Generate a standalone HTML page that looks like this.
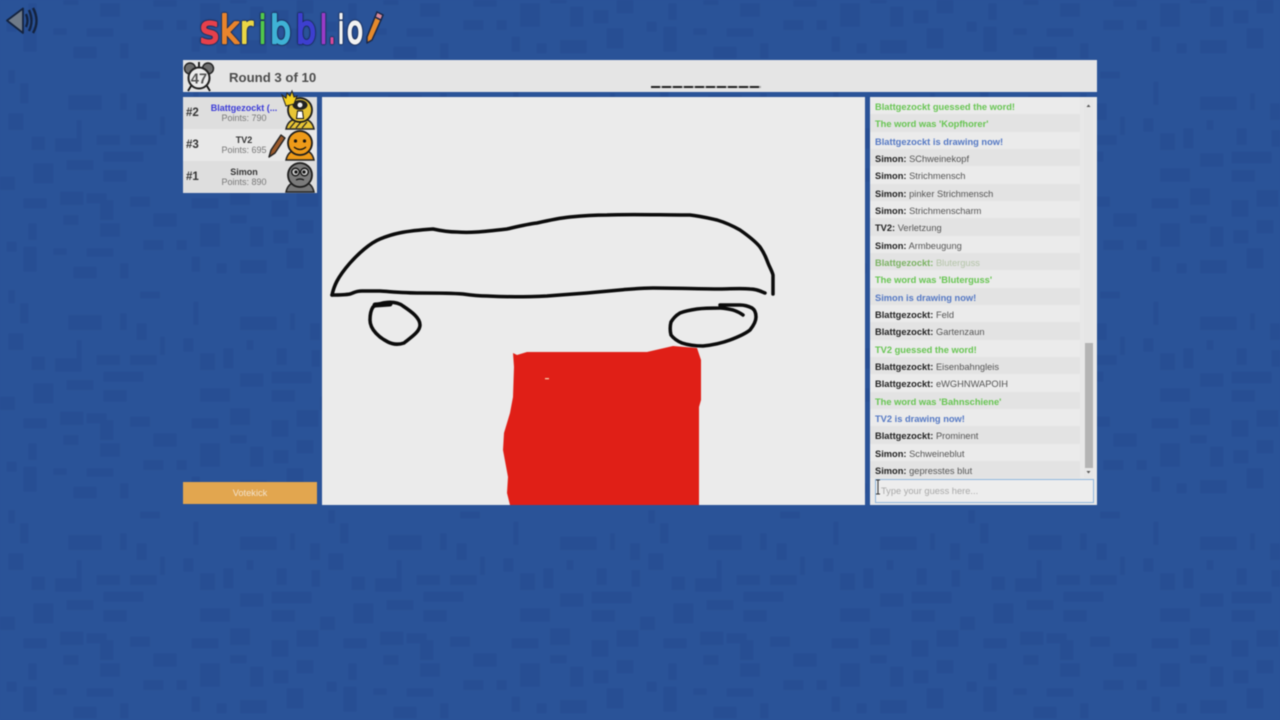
<!DOCTYPE html>
<html lang="de">
<head>
<meta charset="utf-8">
<title>skribbl.io</title>
<style>
html,body{margin:0;padding:0;width:1280px;height:720px;overflow:hidden;background:#2a5398}
body{position:relative;font-family:"Liberation Sans",sans-serif;color:#333}
.abs{position:absolute}
#bg{position:absolute;left:0;top:0;filter:blur(.8px)}
#wrap{position:absolute;left:0;top:0;width:1280px;height:720px;filter:blur(.4px)}
#head{left:183px;top:60px;width:914px;height:32px;background:#e5e5e5}
#round{left:229px;top:70px;font-size:13.2px;font-weight:bold;color:#4c4c4c;line-height:16px;white-space:nowrap}
#word{left:651px;top:86px;width:110px;height:2px;background:repeating-linear-gradient(90deg,#222 0 9px,#aaa 9px 11px)}
#players{left:183px;top:97px;width:134px;height:96px;background:#e8e8e8}
.p{position:absolute;left:0;width:134px;height:32px}
.p.d{background:#dedede}
.rank{position:absolute;left:3px;top:9px;font-size:11.5px;font-weight:bold;color:#333;line-height:14px}
.nm{position:absolute;left:20px;width:82px;top:6px;text-align:center;font-size:9px;line-height:10px;color:#333;font-weight:bold;white-space:nowrap}
.pt{position:absolute;left:20px;width:82px;top:16px;text-align:center;font-size:9px;line-height:10px;color:#777;white-space:nowrap}
#canvas{left:322px;top:97px;width:543px;height:408px;background:#ebebeb}
#chat{left:870px;top:97px;width:227px;height:408px;background:#e8e8e8}
.r{position:absolute;left:0;width:210px;height:17.33px;padding-left:5px;box-sizing:border-box;font-size:9.3px;line-height:20px;white-space:nowrap;color:#555;background:#ebebeb}
.r.o{background:#e3e3e3}
.r b{color:#222}
.g{color:#67c552;font-weight:bold}
.bl{color:#5478c4;font-weight:bold}
#track{left:1084px;top:98px;width:9px;height:380px;background:#e6e6e6}
#thumb{left:1085px;top:343px;width:8px;height:125px;background:#b4b4b4}
#input{left:875px;top:479px;width:219px;height:24px;box-sizing:border-box;background:#ededed;border:1px solid #8fb5dc;font-size:9.3px;line-height:22px;padding-left:5px;color:#a8a8a8}
#vote{left:183px;top:482px;width:134px;height:22px;background:#e2a64f;color:#f3e3cc;font-size:9.3px;line-height:22px;text-align:center}
</style>
</head>
<body>
<svg id="bg" width="1280" height="720" xmlns="http://www.w3.org/2000/svg">
<defs>
<pattern id="doodle" width="960" height="660" patternUnits="userSpaceOnUse" patternTransform="translate(0,60) scale(.33333)">
<g fill="#234a8e" opacity=".5">
<rect x="25" y="30" width="20" height="40"/><rect x="420" y="35" width="60" height="20"/><rect x="60" y="70" width="25" height="60"/><rect x="205" y="105" width="100" height="45"/><rect x="360" y="100" width="20" height="50"/><rect x="410" y="130" width="30" height="50"/><rect x="580" y="65" width="15" height="70"/><rect x="720" y="110" width="110" height="40"/><rect x="870" y="100" width="15" height="50"/><rect x="930" y="130" width="30" height="50"/><rect x="25" y="160" width="45" height="50"/><rect x="480" y="170" width="15" height="55"/><rect x="550" y="175" width="30" height="40"/><rect x="230" y="180" width="15" height="60"/><rect x="740" y="180" width="20" height="30"/><rect x="95" y="230" width="40" height="40"/><rect x="165" y="235" width="80" height="40"/><rect x="290" y="225" width="70" height="30"/><rect x="390" y="225" width="80" height="30"/><rect x="600" y="220" width="45" height="50"/><rect x="670" y="205" width="30" height="60"/><rect x="830" y="205" width="30" height="50"/><rect x="935" y="210" width="25" height="50"/><rect x="310" y="275" width="120" height="30"/><rect x="815" y="275" width="120" height="35"/><rect x="100" y="310" width="60" height="60"/><rect x="200" y="300" width="80" height="30"/><rect x="310" y="330" width="70" height="35"/><rect x="600" y="325" width="90" height="40"/><rect x="815" y="330" width="70" height="35"/><rect x="720" y="280" width="70" height="40"/><rect x="0" y="350" width="45" height="40"/><rect x="70" y="415" width="70" height="30"/><rect x="180" y="395" width="70" height="40"/><rect x="260" y="400" width="60" height="30"/><rect x="390" y="410" width="60" height="30"/><rect x="575" y="415" width="80" height="30"/><rect x="690" y="385" width="60" height="50"/><rect x="815" y="420" width="50" height="50"/><rect x="890" y="390" width="65" height="50"/><rect x="300" y="420" width="40" height="60"/><rect x="190" y="465" width="45" height="30"/><rect x="460" y="460" width="70" height="40"/><rect x="690" y="465" width="50" height="25"/><rect x="85" y="490" width="25" height="50"/><rect x="300" y="490" width="60" height="40"/><rect x="600" y="490" width="60" height="70"/><rect x="890" y="480" width="50" height="40"/><rect x="820" y="510" width="45" height="40"/><rect x="20" y="545" width="30" height="30"/><rect x="430" y="540" width="60" height="30"/><rect x="530" y="540" width="30" height="30"/><rect x="70" y="560" width="40" height="75"/><rect x="160" y="565" width="40" height="20"/><rect x="260" y="565" width="80" height="25"/><rect x="575" y="590" width="25" height="45"/><rect x="720" y="600" width="80" height="40"/><rect x="860" y="565" width="50" height="60"/><rect x="360" y="610" width="25" height="45"/><rect x="220" y="620" width="70" height="35"/><rect x="650" y="610" width="30" height="30"/><rect x="750" y="500" width="40" height="60"/>
</g>
</pattern>
</defs>
<rect width="1280" height="720" fill="#2a5398"/>
<rect width="1280" height="720" fill="url(#doodle)"/>
</svg>
<div id="wrap">

<!-- speaker -->
<svg class="abs" style="left:5px;top:5px" width="34" height="32" viewBox="0 0 34 32" xmlns="http://www.w3.org/2000/svg">
<path d="M2 15.500L18 3.500V28z" fill="#6f7a88" stroke="#14233f" stroke-width="1.800" stroke-linejoin="round"/>
<path d="M21 9q3 7 0 13M24 5q5 11 0 21M28 3q7 13 0 25" fill="none" stroke="#14233f" stroke-width="2.400"/>
</svg>

<!-- logo -->
<svg class="abs" style="left:190px;top:5px" width="200" height="50" viewBox="0 0 200 50" xmlns="http://www.w3.org/2000/svg">
<g font-family="'DejaVu Sans',sans-serif" font-size="38" stroke-width="2.200" stroke-linejoin="round" style="filter:drop-shadow(0 0 .8px #101a38) drop-shadow(0 0 .5px #101a38)">
<text x="10" y="38" fill="#e6404b" stroke="#e6404b" textLength="19" lengthAdjust="spacingAndGlyphs">s</text>
<text x="30" y="38" fill="#e8842c" stroke="#e8842c" textLength="19" lengthAdjust="spacingAndGlyphs">k</text>
<text x="50" y="38" fill="#e9d645" stroke="#e9d645" textLength="13" lengthAdjust="spacingAndGlyphs">r</text>
<text x="69" y="38" fill="#52c94c" stroke="#52c94c" textLength="7" lengthAdjust="spacingAndGlyphs">i</text>
<text x="80" y="38" fill="#3fb2d5" stroke="#3fb2d5" textLength="21" lengthAdjust="spacingAndGlyphs">b</text>
<text x="106" y="38" fill="#3d3fcf" stroke="#3d3fcf" textLength="20" lengthAdjust="spacingAndGlyphs">b</text>
<text x="130" y="38" fill="#9a3cc8" stroke="#9a3cc8" textLength="7" lengthAdjust="spacingAndGlyphs">l</text>
<text x="139" y="38" fill="#d94a9a" stroke="#d94a9a" textLength="6" lengthAdjust="spacingAndGlyphs">.</text>
<text x="148" y="38" fill="#f2f2f2" stroke="#f2f2f2" textLength="6" lengthAdjust="spacingAndGlyphs">i</text>
<text x="157" y="38" fill="#f2f2f2" stroke="#f2f2f2" textLength="16" lengthAdjust="spacingAndGlyphs">o</text>
</g>
<path d="M177 32L185 12l6 3-9 20-5 3z" fill="#e58a2c" stroke="#1a2748" stroke-width="1.500" stroke-linejoin="round"/>
<path d="M185 12l2-5 6 3-2 5z" fill="#d98a9a" stroke="#1a2748" stroke-width="1.500"/>
</svg>

<div class="abs" id="head"></div>
<!-- clock -->
<svg class="abs" style="left:183px;top:60px" width="32" height="32" viewBox="0 0 32 32" xmlns="http://www.w3.org/2000/svg">
<circle cx="7" cy="8.500" r="5.500" fill="#6e6e6e" stroke="#222" stroke-width="1.400"/>
<circle cx="25" cy="8.500" r="5.500" fill="#6e6e6e" stroke="#222" stroke-width="1.400"/>
<path d="M16 2v5M8 26l-3 5M24 26l3 5" stroke="#111" stroke-width="1.800" fill="none"/>
<circle cx="16" cy="18" r="10.500" fill="#ececec" stroke="#222" stroke-width="2"/>
<text x="16" y="23.500" font-family="'Liberation Sans',sans-serif" font-size="14.500" font-weight="bold" fill="#555" text-anchor="middle">47</text>
</svg>
<div class="abs" id="round">Round 3 of 10</div>
<div class="abs" id="word"></div>

<!-- players -->
<div class="abs" id="players">
<div class="p d" style="top:0"><span class="rank">#2</span><span class="nm" style="color:#3a3ad8">Blattgezockt (...</span><span class="pt">Points: 790</span></div>
<div class="p" style="top:32px"><span class="rank">#3</span><span class="nm">TV2</span><span class="pt">Points: 695</span></div>
<div class="p d" style="top:64px"><span class="rank">#1</span><span class="nm">Simon</span><span class="pt">Points: 890</span></div>
</div>
<svg class="abs" style="left:262px;top:88px" width="58" height="106" viewBox="262 88 58 106" xmlns="http://www.w3.org/2000/svg">
<!-- avatar 1 -->
<path d="M286 129q2-9 10-10h8q8 1 10 10z" fill="#e8c535" stroke="#222" stroke-width="1.500"/>
<path d="M290 128l5-6M296 128l5-6M302 128l5-6" stroke="#222" stroke-width="1.200"/>
<circle cx="300" cy="110" r="12" fill="#e8c535" stroke="#1c1c1c" stroke-width="1.800"/>
<ellipse cx="300" cy="105" rx="7.500" ry="5" fill="#222"/><circle cx="300" cy="105" r="2.500" fill="#eee"/>
<path d="M297.500 111h5l1 7.500h-7z" fill="#fff" stroke="#111"/>
<path d="M282 95l4 3 1-5 3 3 2-5 2 6 3-1-3 8-8 2z" fill="#f5d020" stroke="#222" stroke-width="1"/>
<!-- avatar 2 -->
<path d="M286 160q2-9 10-10h8q8 1 10 10z" fill="#ee9a18" stroke="#222" stroke-width="1.500"/>
<circle cx="300" cy="143" r="12" fill="#ee9a18" stroke="#1c1c1c" stroke-width="1.800"/>
<circle cx="295.500" cy="141" r="1.600" fill="#111"/><circle cx="304.500" cy="141" r="1.600" fill="#111"/>
<path d="M294 147q6 5 12 0" fill="none" stroke="#111" stroke-width="1.300"/>
<path d="M269 157l2-7 10-15 4 3-10 15z" fill="#9a5a2c" stroke="#222" stroke-width="1.400" stroke-linejoin="round"/>
<!-- avatar 3 -->
<path d="M286 192q2-9 10-10h8q8 1 10 10z" fill="#777" stroke="#222" stroke-width="1.500"/>
<circle cx="300" cy="175" r="12" fill="#7b7b7b" stroke="#1c1c1c" stroke-width="1.800"/>
<circle cx="295.500" cy="172" r="3.800" fill="#ccc" stroke="#111" stroke-width="1.300"/><circle cx="304.500" cy="172" r="3.800" fill="#ccc" stroke="#111" stroke-width="1.300"/>
<circle cx="296" cy="172" r="1.600" fill="#111"/><circle cx="304" cy="172" r="1.600" fill="#111"/>
<path d="M296 180q4-2 8 0" fill="none" stroke="#111" stroke-width="1.200"/>
</svg>

<div class="abs" id="vote">Votekick</div>

<!-- canvas -->
<div class="abs" id="canvas"></div>
<svg class="abs" style="left:322px;top:97px" width="543" height="408" viewBox="322 97 543 408" xmlns="http://www.w3.org/2000/svg">
<path d="M513 353L517 355 527 352 647 352 673 346 697 348 701 360 701 400 699 407 699 505 510 505 507 493 508 477 503 450 504 433 510 413 513 397 514 367z" fill="#e01f17"/>
<rect x="545" y="378" width="4" height="1.300" fill="#f7c9a8"/>
<g fill="none" stroke="#0b0b0b" stroke-width="3.500" stroke-linecap="round" stroke-linejoin="round">
<path d="M332 295C334 286 337 278 350 263C358 254 370 243 380 239C392 234 403 231 433 229C442 231 448 232 457 232C470 233 480 232 507 229C520 226 528 224 537 223C550 220 560 218 570 217C590 215 600 215 607 215C630 214 660 215 690 215C700 216 708 218 717 220C727 223 733 226 740 230C750 237 756 242 760 247C765 254 766 258 768 263C770 268 772 271 773 275L773 294"/>
<path d="M332 295C340 295 345 295 350 294C354 293 355 291 362 291C372 291 375 291 380 291C395 292 405 293 420 293C435 293 450 293 463 294C470 295 478 296 487 296C505 297 525 297 547 296C560 295 575 294 587 293C598 292 608 291 620 290C632 289 640 288 653 288C675 288 700 289 720 289C730 289 740 288 750 289C756 289 760 291 765 293"/>
<path d="M373 307C380 302 395 300 403 306C412 312 420 318 420 325C420 332 410 338 404 343C398 345 392 344 388 342C380 338 370 330 370 320C370 314 371 310 373 307"/>
<path d="M375 305L390 304" stroke-width="5"/>
<path d="M743 315C739 312 736 311 733 310C728 309 725 308 720 308C712 308 705 308 697 309C690 310 685 311 680 313C675 316 673 319 671 322C670 326 670 331 671 335C674 339 677 341 682 343C688 345 695 346 703 346C713 345 722 343 730 340C738 337 745 334 750 330C754 325 756 321 756 317C756 313 755 310 752 308C748 306 744 305 740 305L720 305"/>
</g>
</svg>

<!-- chat -->
<div class="abs" id="chat">
<div class="r g" style="top:0">Blattgezockt guessed the word!</div>
<div class="r o g" style="top:17.33px">The word was 'Kopfhorer'</div>
<div class="r bl" style="top:34.66px">Blattgezockt is drawing now!</div>
<div class="r o" style="top:51.99px"><b>Simon:</b> SChweinekopf</div>
<div class="r" style="top:69.32px"><b>Simon:</b> Strichmensch</div>
<div class="r o" style="top:86.65px"><b>Simon:</b> pinker Strichmensch</div>
<div class="r" style="top:103.98px"><b>Simon:</b> Strichmenscharm</div>
<div class="r o" style="top:121.31px"><b>TV2:</b> Verletzung</div>
<div class="r" style="top:138.64px"><b>Simon:</b> Armbeugung</div>
<div class="r o" style="top:155.97px"><b style="color:#7ab262">Blattgezockt:</b> <span style="color:#b4c4a8">Bluterguss</span></div>
<div class="r g" style="top:173.3px">The word was 'Bluterguss'</div>
<div class="r o bl" style="top:190.63px">Simon is drawing now!</div>
<div class="r" style="top:207.96px"><b>Blattgezockt:</b> Feld</div>
<div class="r o" style="top:225.29px"><b>Blattgezockt:</b> Gartenzaun</div>
<div class="r g" style="top:242.62px">TV2 guessed the word!</div>
<div class="r o" style="top:259.95px"><b>Blattgezockt:</b> Eisenbahngleis</div>
<div class="r" style="top:277.28px"><b>Blattgezockt:</b> eWGHNWAPOIH</div>
<div class="r o g" style="top:294.61px">The word was 'Bahnschiene'</div>
<div class="r bl" style="top:311.94px">TV2 is drawing now!</div>
<div class="r o" style="top:329.27px"><b>Blattgezockt:</b> Prominent</div>
<div class="r" style="top:346.6px"><b>Simon:</b> Schweineblut</div>
<div class="r o" style="top:363.93px"><b>Simon:</b> gepresstes blut</div>
</div>
<div class="abs" id="track"></div>
<div class="abs" id="thumb"></div>
<svg class="abs" style="left:1084px;top:101px" width="9" height="376" viewBox="0 0 9 376" xmlns="http://www.w3.org/2000/svg"><path d="M2.500 6l2-2.500 2 2.500zM2.500 370l2 2.500 2-2.500z" fill="#555"/></svg>
<div class="abs" id="input">Type your guess here...</div>
<svg class="abs" style="left:874px;top:479px" width="10" height="18" viewBox="0 0 10 18" xmlns="http://www.w3.org/2000/svg"><path d="M2 1h4M4 1v14M2 15h4" stroke="#333" stroke-width="1" fill="none"/></svg>
</div>
</body>
</html>
